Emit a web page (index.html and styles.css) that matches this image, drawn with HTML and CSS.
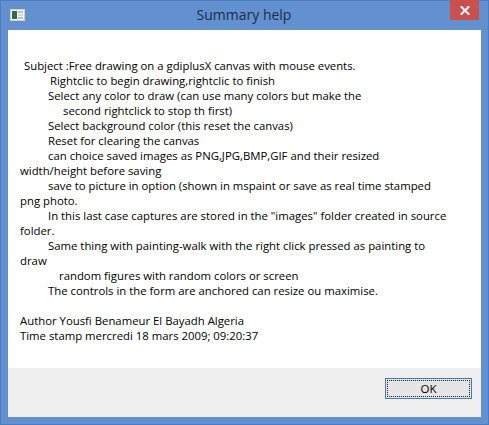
FILE: index.html
```html
<!DOCTYPE html>
<html>
<head>
<meta charset="utf-8">
<link rel="stylesheet" href="styles.css">
</head>
<body>
<div class="window">
  <div class="titlebar">
    <svg class="app-icon" width="15" height="12" viewBox="0 0 15 12">
      <rect x="0.5" y="0.5" width="14" height="11" fill="#f4f6f4" stroke="#c9d2cc"/>
      <rect x="2" y="2" width="5" height="8" fill="#2f6a4e"/>
      <rect x="8" y="2" width="5" height="2" fill="#b9c6be"/>
      <rect x="8" y="5" width="5" height="2" fill="#cfd8d2"/>
      <rect x="8" y="8" width="5" height="2" fill="#b9c6be"/>
    </svg>
    <div class="title">Summary help</div>
    <div class="close">
      <svg width="10" height="9" viewBox="0 0 10 9"><path d="M1.5 1 L8.5 8 M8.5 1 L1.5 8" stroke="#fff" stroke-width="2" stroke-linecap="square"/></svg>
    </div>
  </div>
  <div class="client">
    <div class="content">
      <div class="line in-s">Subject :Free drawing on a gdiplusX canvas with mouse events.</div>
      <div class="line in-r">Rightclic to begin drawing,rightclic to finish</div>
      <div class="line in">Select any color to draw (can use many colors but make the</div>
      <div class="line in-2">second rightclick to stop th first)</div>
      <div class="line in">Select background color (this reset the canvas)</div>
      <div class="line in">Reset for clearing the canvas</div>
      <div class="line in">can choice saved images as PNG,JPG,BMP,GIF and their resized</div>
      <div class="line">width/height before saving</div>
      <div class="line in">save to picture in option (shown in mspaint or save as real time stamped</div>
      <div class="line">png photo.</div>
      <div class="line in">In this last case captures are stored in the "images" folder created in source</div>
      <div class="line">folder.</div>
      <div class="line in">Same thing with painting-walk with the right click pressed as painting to</div>
      <div class="line">draw</div>
      <div class="line in-3">random figures with random colors or screen</div>
      <div class="line in">The controls in the form are anchored can resize ou maximise.</div>
      <div class="line">&nbsp;</div>
      <div class="line">Author Yousfi Benameur El Bayadh Algeria</div>
      <div class="line">Time stamp mercredi 18 mars 2009; 09:20:37</div>
    </div>
    <div class="footer">
      <button class="ok"><span class="focus">OK</span></button>
    </div>
  </div>
</div>
</body>
</html>
```

FILE: styles.css
```css
html, body {
  margin: 0;
  padding: 0;
}
body {
  width: 489px;
  height: 425px;
  overflow: hidden;
  font-family: "Open Sans", "Noto Sans", sans-serif;
}
.window {
  box-sizing: border-box;
  width: 489px;
  height: 425px;
  background: #6390cf;
  border: 1px solid #4c7cc0;
  display: flex;
  flex-direction: column;
}
.titlebar {
  height: 29px;
  position: relative;
  display: flex;
  align-items: center;
  justify-content: center;
  flex: none;
}
.app-icon {
  position: absolute;
  left: 9px;
  top: 8px;
}
.title {
  font-size: 14px;
  color: #1c2d4a;
  margin-top: -2px;
  margin-left: -1px;
}
.close {
  position: absolute;
  right: 9px;
  top: -1px;
  width: 29px;
  height: 20px;
  background: #c9504e;
  display: flex;
  align-items: center;
  justify-content: center;
}
.client {
  flex: 1;
  margin: 0 7px 7px 7px;
  display: flex;
  flex-direction: column;
}
.content {
  flex: 1;
  background: #ffffff;
  padding: 28px 0 0 12px;
  font-size: 11.35px;
  line-height: 15px;
  color: #000;
}
.line {
  white-space: nowrap;
  height: 15px;
}
.in-s { padding-left: 4px; }
.in-r { padding-left: 30px; }
.in { padding-left: 28px; }
.in-2 { padding-left: 43px; }
.in-3 { padding-left: 39px; }
.footer {
  height: 49px;
  flex: none;
  background: #f0f0f0;
  display: flex;
  justify-content: flex-end;
  align-items: flex-start;
  padding: 10px 9px 0 0;
  box-sizing: border-box;
}
.ok {
  box-sizing: border-box;
  width: 87px;
  height: 21px;
  border: 1px solid #3c7fb1;
  background: #e5e5e5;
  padding: 1px;
  margin: 0;
  font-family: "Open Sans", "Noto Sans", sans-serif;
  font-size: 11.5px;
  color: #000;
  display: flex;
}
.focus {
  flex: 1;
  border: 1px dotted #222;
  display: flex;
  align-items: center;
  justify-content: center;
  line-height: 13px;
}
```
